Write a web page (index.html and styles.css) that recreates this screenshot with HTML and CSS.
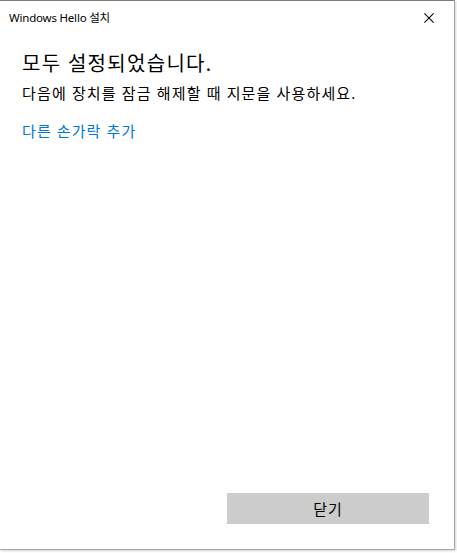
FILE: index.html
```html
<!DOCTYPE html>
<html lang="ko">
<head>
<meta charset="utf-8">
<title>Windows Hello 설치</title>
<link rel="stylesheet" href="styles.css">
</head>
<body>
<div class="window">
  <div class="titlebar">
    <span class="title">Windows Hello 설치</span>
    <button class="close" aria-label="닫기">
      <svg width="10" height="10" viewBox="0 0 10 10"><path d="M0.4 0.4 L9.6 9.6 M9.6 0.4 L0.4 9.6" stroke="#000" stroke-width="1.05" fill="none"/></svg>
    </button>
  </div>
  <div class="content">
    <h1 class="heading">모두 설정되었습니다.</h1>
    <p class="desc">다음에 장치를 잠금 해제할 때 지문을 사용하세요.</p>
    <a class="link" href="#">다른 손가락 추가</a>
  </div>
  <div class="footer">
    <button class="btn">닫기</button>
  </div>
</div>
</body>
</html>
```
FILE: styles.css
```css
html, body {
  margin: 0;
  padding: 0;
  background: #ffffff;
}
body {
  width: 457px;
  height: 553px;
  overflow: hidden;
  font-family: "Noto Sans", "Noto Sans CJK KR", sans-serif;
  color: #000;
}
.window {
  box-sizing: border-box;
  width: 455px;
  height: 550px;
  border-top: 1px solid #7a7a7a;
  border-right: 1px solid #a8a8a8;
  border-bottom: 1px solid #a8a8a8;
  box-shadow: 1px 1px 2px rgba(0,0,0,0.18);
  background: #fff;
  display: flex;
  flex-direction: column;
}
.titlebar {
  height: 31px;
  display: flex;
  align-items: center;
  justify-content: space-between;
  padding-left: 9px;
  padding-right: 20px;
}
.title {
  font-size: 11.5px;
  letter-spacing: -0.2px;
  line-height: 16px;
  color: #000;
  margin-top: 2px;
}
.close {
  border: 0;
  background: none;
  padding: 0;
  width: 10px;
  height: 10px;
  display: flex;
  margin-top: 3px;
}
.content {
  flex: 1;
  padding: 18px 22px 0;
  display: flex;
  flex-direction: column;
  align-items: flex-start;
}
.heading {
  margin: 0;
  font-size: 20px;
  font-weight: 400;
  line-height: 28px;
  letter-spacing: 1.3px;
}
.desc {
  margin: 4px 0 0;
  font-size: 15px;
  line-height: 22px;
  letter-spacing: 1.15px;
}
.link {
  margin-top: 16px;
  font-size: 15px;
  line-height: 22px;
  letter-spacing: 1.1px;
  color: #0078d7;
  text-decoration: none;
}
.footer {
  display: flex;
  justify-content: flex-end;
  padding: 0 25px 25px 0;
}
.btn {
  width: 202px;
  height: 31px;
  border: 0;
  background: #cccccc;
  font-family: "Noto Sans", "Noto Sans CJK KR", sans-serif;
  font-size: 15px;
  letter-spacing: 1px;
  color: #000;
  padding: 0;
}
```
